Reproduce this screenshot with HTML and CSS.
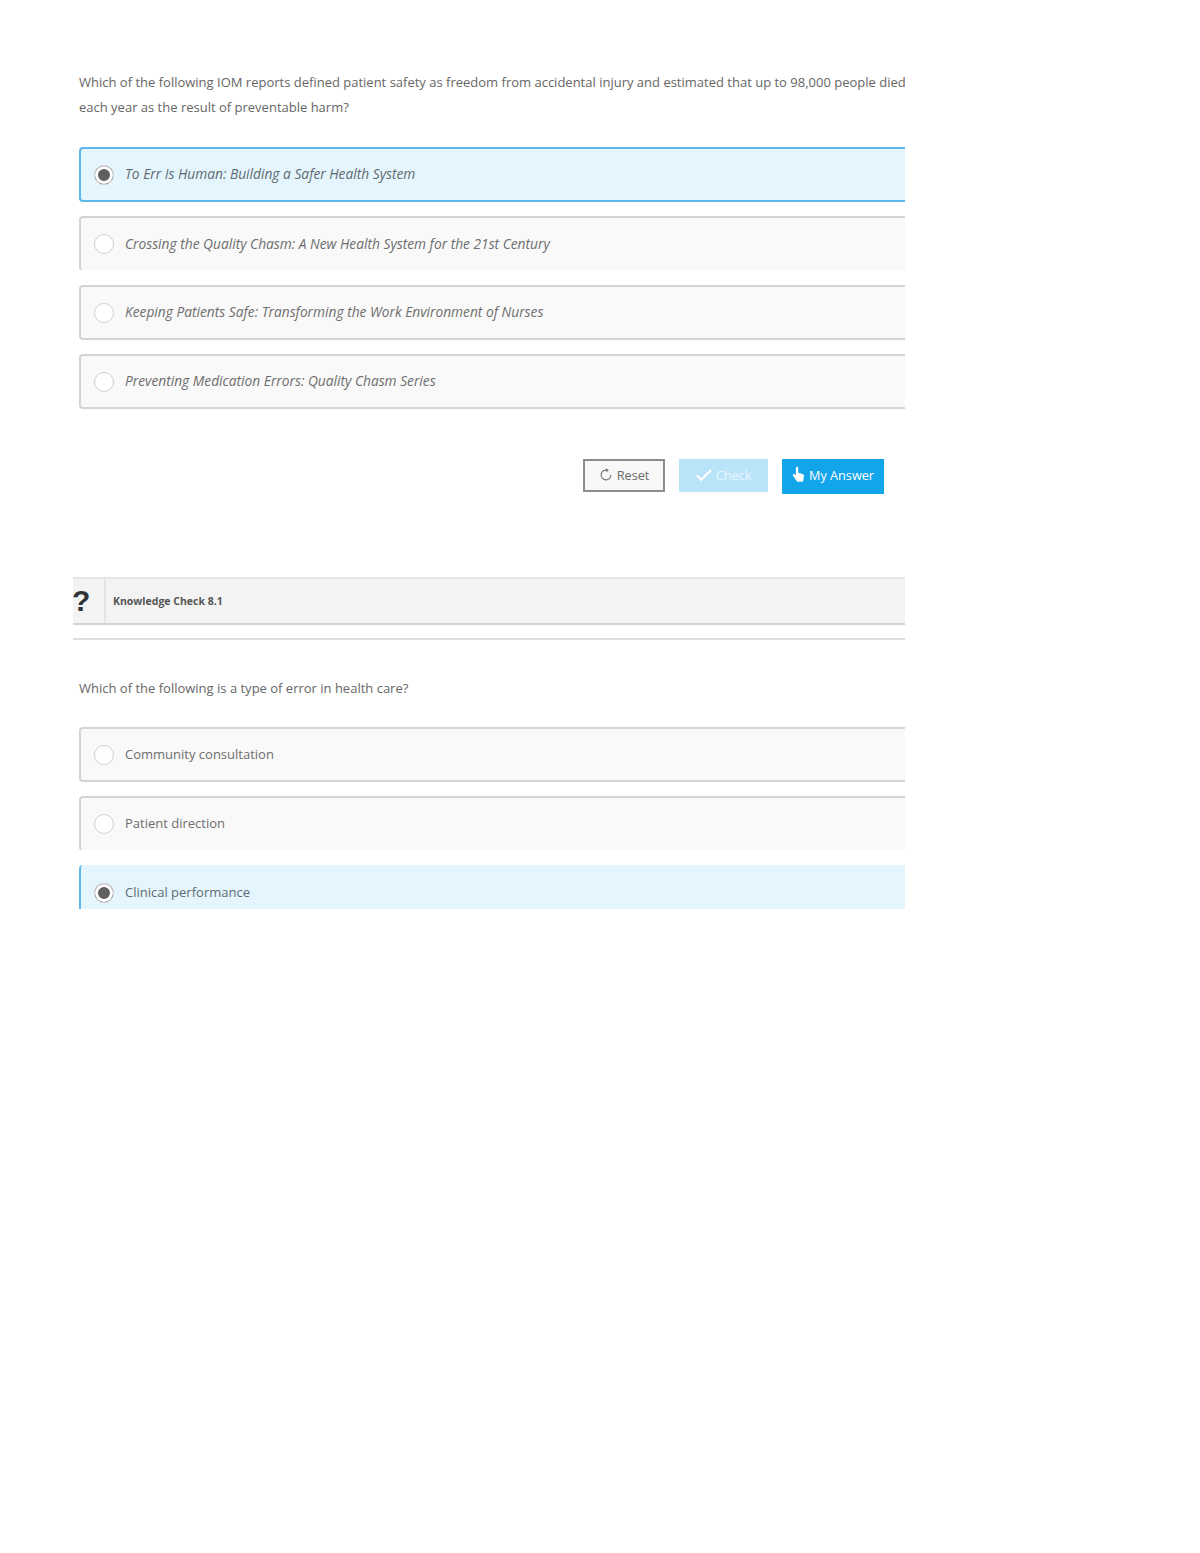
FILE: index.html
```html
<!DOCTYPE html>
<html lang="en">
<head>
<meta charset="utf-8">
<title>Knowledge Check</title>
<link rel="stylesheet" href="styles.css">
</head>
<body>
<main class="sheet">
  <section class="quiz quiz-first">
    <p class="question">Which of the following IOM reports defined patient safety as freedom from accidental injury and estimated that up to 98,000 people died each year as the result of preventable harm?</p>
    <ul class="options">
      <li class="option selected"><span class="radio"></span><em>To Err Is Human: Building a Safer Health System</em></li>
      <li class="option no-bottom"><span class="radio"></span><em>Crossing the Quality Chasm: A New Health System for the 21st Century</em></li>
      <li class="option"><span class="radio"></span><em>Keeping Patients Safe: Transforming the Work Environment of Nurses</em></li>
      <li class="option"><span class="radio"></span><em>Preventing Medication Errors: Quality Chasm Series</em></li>
    </ul>
    <div class="actions">
      <button class="btn btn-reset" type="button">
        <svg class="icon" viewBox="0 0 16 16" aria-hidden="true"><path d="M9.5 2.6A5.6 5.6 0 1 0 13.6 8" fill="none" stroke="#777" stroke-width="1.3"/><path d="M8.3 0.4v4.4l3-2.2z" fill="#777"/></svg>
        Reset
      </button>
      <button class="btn btn-check" type="button">
        <svg class="icon icon-check" viewBox="0 0 16 16" aria-hidden="true"><path d="M1 8.500l4.200 4.200L15 3" fill="none" stroke="#fff" stroke-width="2.200"/></svg>
        Check
      </button>
      <button class="btn btn-answer" type="button">
        <svg class="icon icon-hand" viewBox="0 0 14 18" aria-hidden="true"><path d="M4.600 1.100c.8-.9 2.100-.4 2.100.8v5.300l4.700 1.300c1 .3 1.500 1 1.400 2l-.7 5.300c0 .6-.5 1-1 1H6.200c-.4 0-.8-.2-1-.6L1.100 10.300c-.7-1.100.7-2.400 1.800-1.500l1.300 1.100V2.100z" fill="#fff"/></svg>
        My Answer
      </button>
    </div>
  </section>
  <header class="check-bar">
    <span class="mark">?</span>
    <h2 class="check-title">Knowledge Check 8.1</h2>
  </header>
  <hr class="rule">
  <section class="quiz">
    <p class="question">Which of the following is a type of error in health care?</p>
    <ul class="options">
      <li class="option"><span class="radio"></span>Community consultation</li>
      <li class="option no-bottom"><span class="radio"></span>Patient direction</li>
      <li class="option selected no-edges"><span class="radio"></span>Clinical performance</li>
    </ul>
  </section>
</main>
</body>
</html>
```
FILE: styles.css
```css
* { box-sizing: border-box; }
html, body { margin: 0; padding: 0; background: #fff; }
body { height: 1553px; font-family: "Open Sans", "Liberation Sans", sans-serif; color: #666; }
.sheet { width: 832px; height: 909px; margin-left: 73px; overflow: hidden; }
.quiz { padding-left: 6px; }
.quiz-first { padding-top: 70px; }
.question { margin: 0; width: 830px; font-size: 13px; line-height: 25px; color: #666; }
.options { list-style: none; margin: 26px 0 0; padding: 0; width: 840px; display: flex; flex-direction: column; gap: 14px; }
.quiz-first .options { margin-top: 27px; }
.option { height: 55px; display: flex; align-items: center; gap: 11px; padding: 0 0 2px 13px; font-size: 13px; color: #6e6e6e; background: #f9f9f9; border: 2px solid #d4d4d4; border-right: 0; border-radius: 4px 0 0 4px; }
.option em { font-style: italic; font-size: 13.75px; }
.no-bottom { border-bottom: 1px solid #fff; }
.selected { background: #e4f5fd; border-color: #5cb8e8; color: #5f6a70; }
.no-edges { border-top: 0; border-bottom: 0; }
.radio { flex: none; width: 20px; height: 20px; margin-top: 2px; border-radius: 50%; background: #fff; border: 1px solid #cfcfcf; }
.selected .radio { background: #5f5f5f; box-shadow: inset 0 0 0 3px #fff; }
.actions { display: flex; align-items: flex-start; justify-content: flex-end; gap: 14px; width: 805px; margin-top: 50px; }
.btn { display: inline-flex; align-items: center; justify-content: center; gap: 4px; height: 33px; padding: 0 0 2px; font: 12.7px "Open Sans", "Liberation Sans", sans-serif; border: 0; }
.icon { width: 14px; height: 14px; flex: none; }
.icon-check { width: 16px; height: 16px; }
.icon-hand { width: 13px; height: 17px; }
.btn-reset { width: 82px; background: #f8f8f8; border: 2px solid #8c8c8c; color: #6a6a6a; }
.btn-check { width: 89px; background: #b9e3f9; color: #e9f7fe; }
.btn-answer { width: 102px; height: 35px; padding-bottom: 4px; background: #13a5ea; color: #fff; }
.check-bar { display: flex; align-items: center; height: 48px; margin-top: 83px; background: #f3f3f3; border-top: 2px solid #e6e6e6; border-bottom: 2px solid #d4d4d4; }
.mark { flex: none; width: 33px; height: 100%; font: 700 30px/44px "Liberation Sans", sans-serif; color: #2f3338; border-right: 2px solid #e4e4e4; margin-right: 7px; text-indent: -1px; }
.check-title { margin: 0; font-size: 10.5px; font-weight: 700; color: #555; }
.rule { height: 2px; margin: 13px 0 0; border: 0; background: #dedede; }
.rule + .quiz { padding-top: 36px; }
```
